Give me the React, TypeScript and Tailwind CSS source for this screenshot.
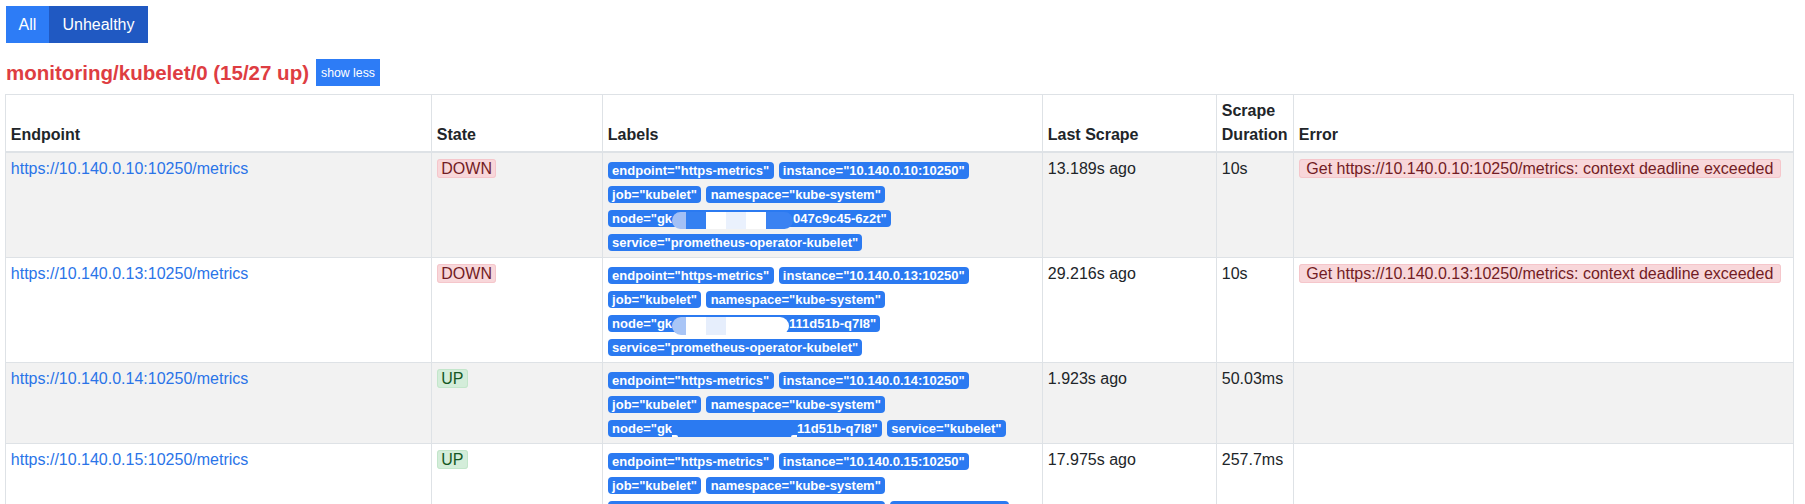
import React from "react";

function Badge({ children }: { children: React.ReactNode }) {
  return (
    <span className="mb-[1.6px] mt-[5px] inline-flex h-[17.4px] items-center whitespace-nowrap rounded-[4px] bg-[#2b7af1] px-[4.3px] text-[13px] font-bold leading-[13px] text-white">
      {children}
    </span>
  );
}

function RedactA() {
  return (
    <span className="relative top-[1.5px] inline-flex h-[17px] w-[121px]">
      <span className="h-full w-[14px] rounded-l-full bg-[#a3c0f5]" />
      <span className="h-full w-[20px] bg-[#3480f1]" />
      <span className="h-full w-[20px] bg-white" />
      <span className="h-full w-[20px] bg-[#eaf1fd]" />
      <span className="h-full w-[20px] bg-white" />
      <span className="h-full w-[27px] rounded-r-full bg-[#3a82f2]" />
    </span>
  );
}

function RedactB() {
  return (
    <span className="relative top-[2px] inline-flex h-[18px] w-[117px]">
      <span className="h-full w-[14px] rounded-l-full bg-[#a9c5f6]" />
      <span className="h-full w-[20px] bg-white" />
      <span className="h-full w-[20px] bg-[#e6eefc]" />
      <span className="h-full w-[40px] bg-white" />
      <span className="h-full w-[23px] rounded-r-full bg-white" />
    </span>
  );
}

function RedactC({ w }: { w: string }) {
  return (
    <span className={`relative inline-flex h-[17.4px] ${w} bg-[#2b7af1]`}>
      <span className="absolute bottom-0 left-0 h-[2px] w-[6px] rounded-tr-full bg-white" />
      <span className="absolute bottom-0 right-0 h-[2px] w-[6px] rounded-tl-full bg-white" />
    </span>
  );
}

type Row = {
  ip: string;
  state: "UP" | "DOWN";
  last: string;
  dur: string;
  error: boolean;
  node: React.ReactNode;
  nodeWithService: boolean;
};

const rows: Row[] = [
  {
    ip: "10.140.0.10",
    state: "DOWN",
    last: "13.189s ago",
    dur: "10s",
    error: true,
    node: (
      <>
        node="gk
        <RedactA />
        047c9c45-6z2t"
      </>
    ),
    nodeWithService: false,
  },
  {
    ip: "10.140.0.13",
    state: "DOWN",
    last: "29.216s ago",
    dur: "10s",
    error: true,
    node: (
      <>
        node="gk
        <RedactB />
        111d51b-q7l8"
      </>
    ),
    nodeWithService: false,
  },
  {
    ip: "10.140.0.14",
    state: "UP",
    last: "1.923s ago",
    dur: "50.03ms",
    error: false,
    node: (
      <>
        node="gk
        <RedactC w="w-[125px]" />
        11d51b-q7l8"
      </>
    ),
    nodeWithService: true,
  },
  {
    ip: "10.140.0.15",
    state: "UP",
    last: "17.975s ago",
    dur: "257.7ms",
    error: false,
    node: (
      <>
        node="gk
        <RedactC w="w-[128px]" />
        11d51b-q7l8"
      </>
    ),
    nodeWithService: true,
  },
];

const headers = ["Endpoint", "State", "Labels", "Last Scrape", "Scrape Duration", "Error"];

export default function App() {
  return (
    <div className="min-h-screen bg-white pl-[5px] pr-[12px] pt-[6px] font-['Liberation_Sans',Arial,sans-serif] text-[16px] leading-[24px] text-[#212529]">
      <div className="ml-[1px] flex">
        <button className="h-[37px] w-[43px] bg-[#2d7cf6] text-[16px] text-white">All</button>
        <button className="h-[37px] w-[99px] bg-[#2059c2] text-[16px] text-white">Unhealthy</button>
      </div>
      <div className="ml-[1px] mt-[16px] flex h-[27px] items-center">
        <h2 className="text-[20.5px] font-bold leading-[25px] text-[#de3d42]">monitoring/kubelet/0 (15/27 up)</h2>
        <button className="ml-[7px] h-[27px] w-[64px] bg-[#2d7cf6] text-[12.3px] leading-[18px] text-white">show less</button>
      </div>
      <table className="mt-[8px] w-[1788px] table-fixed border-collapse">
        <colgroup>
          <col className="w-[426px]" />
          <col className="w-[171px]" />
          <col className="w-[440px]" />
          <col className="w-[174px]" />
          <col className="w-[77px]" />
          <col className="w-[500px]" />
        </colgroup>
        <thead>
          <tr>
            {headers.map((h) => (
              <th
                key={h}
                className="border border-b-2 border-[#dee2e6] px-[4.8px] py-[4px] text-left align-bottom font-bold"
              >
                {h}
              </th>
            ))}
          </tr>
        </thead>
        <tbody>
          {rows.map((r, i) => (
            <tr key={r.ip} className={i % 2 === 0 ? "bg-[#f2f2f2]" : "bg-white"}>
              <td className="border border-[#dee2e6] px-[4.8px] py-[4px] align-top">
                <a className="text-[#2a74e8]" href="#">
                  https://{r.ip}:10250/metrics
                </a>
              </td>
              <td className="border border-[#dee2e6] px-[4.8px] py-[4px] align-top">
                {r.state === "DOWN" ? (
                  <span className="rounded-[3px] border border-[#f5c6cb] bg-[#f8d7da] px-[3.5px] text-[#721c24]">DOWN</span>
                ) : (
                  <span className="rounded-[3px] border border-[#c3e6cb] bg-[#d4edda] px-[3.5px] text-[#155724]">UP</span>
                )}
              </td>
              <td className="border border-[#dee2e6] px-[4.8px] py-[4px] align-top">
                <div className="flex flex-wrap gap-x-[5px]">
                  <Badge>endpoint="https-metrics"</Badge>
                  <Badge>instance="{r.ip}:10250"</Badge>
                  <Badge>job="kubelet"</Badge>
                  <Badge>namespace="kube-system"</Badge>
                  <Badge>{r.node}</Badge>
                  <Badge>{r.nodeWithService ? 'service="kubelet"' : 'service="prometheus-operator-kubelet"'}</Badge>
                </div>
              </td>
              <td className="border border-[#dee2e6] px-[4.8px] py-[4px] align-top">{r.last}</td>
              <td className="border border-[#dee2e6] px-[4.8px] py-[4px] align-top">{r.dur}</td>
              <td className="border border-[#dee2e6] px-[4.8px] py-[4px] align-top">
                {r.error && (
                  <span className="rounded-[3px] border border-[#f5c6cb] bg-[#f8d7da] px-[6.5px] text-[#721c24]">
                    Get https://{r.ip}:10250/metrics: context deadline exceeded
                  </span>
                )}
              </td>
            </tr>
          ))}
        </tbody>
      </table>
    </div>
  );
}
